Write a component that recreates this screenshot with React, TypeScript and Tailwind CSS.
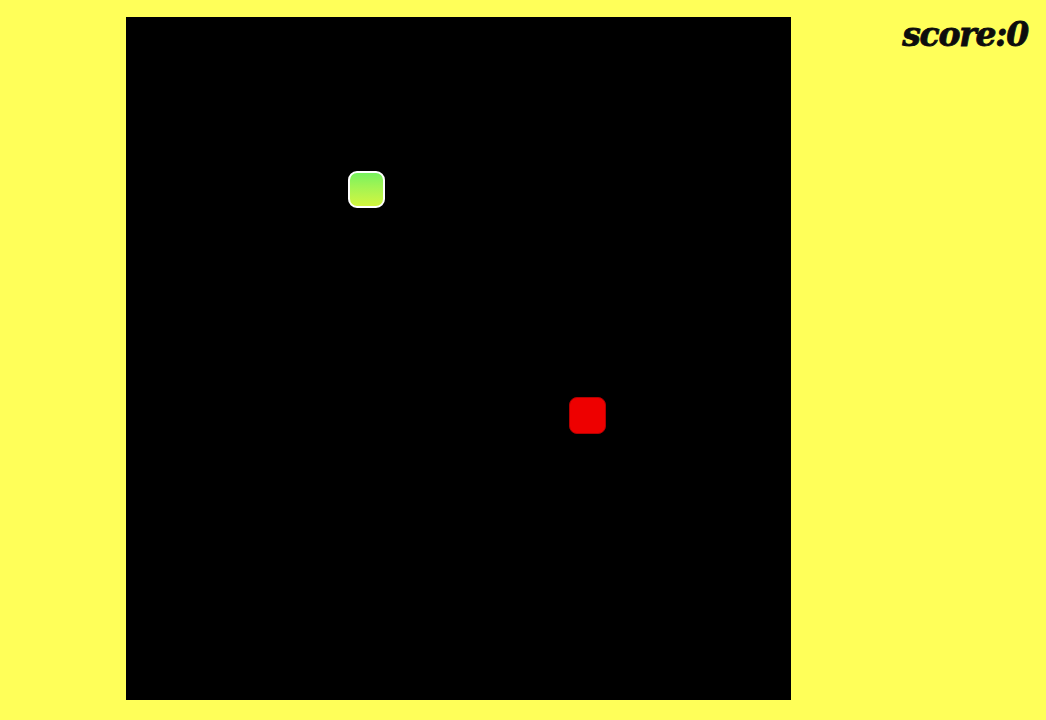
export default function App() {
  return (
    <div className="flex h-[720px] w-full items-start justify-between bg-[#ffff59] pl-[126px] pr-[18px] pt-[17px]">
      <div className="relative h-[683px] w-[665px] bg-black">
        {/* snake head */}
        <div className="absolute left-[222px] top-[154px] h-[37px] w-[37px] rounded-[9px] border-2 border-white bg-gradient-to-b from-[#76f25e] to-[#d2f63e]" />
        {/* food */}
        <div className="absolute left-[443px] top-[380px] h-[37px] w-[37px] rounded-[8px] border border-[#b00000] bg-[#ee0000]" />
      </div>
      <div className="mt-[-7px] font-['DejaVu_Serif',serif] text-[33px] font-black italic tracking-[-1.2px] text-[#0d0d0d] [-webkit-text-stroke:0.8px_#0d0d0d]">
        score:0
      </div>
    </div>
  );
}
